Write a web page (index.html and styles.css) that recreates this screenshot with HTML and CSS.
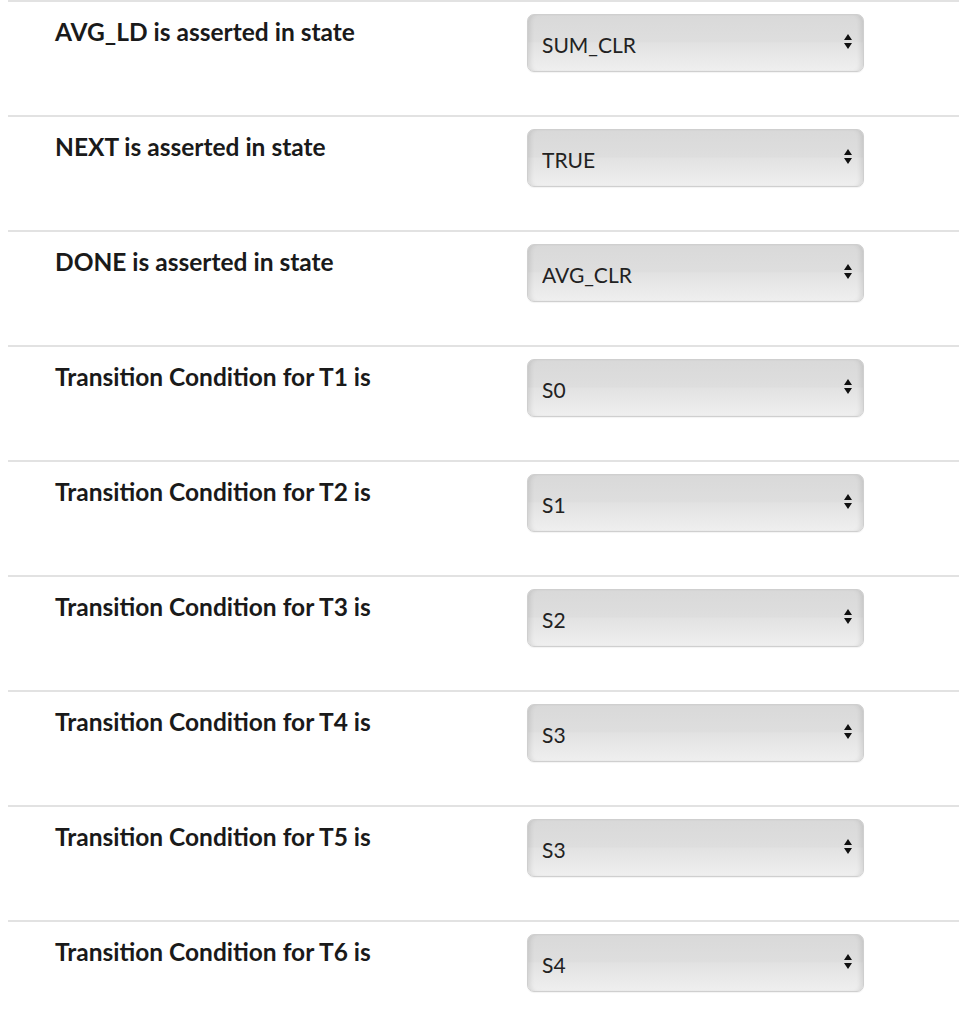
FILE: index.html
```html
<!DOCTYPE html>
<html>
<head>
<meta charset="utf-8">
<link rel="stylesheet" href="styles.css">
</head>
<body>
<div class="list">
  <div class="row"><div class="label">AVG_LD is asserted in state</div><div class="sel"><select><option>SUM_CLR</option></select><svg class="arr" width="10" height="15" viewBox="0 0 10 15"><path d="M5 0 L9 6 L1 6 Z M1 9 L9 9 L5 15 Z" fill="#111"/></svg></div></div>
  <div class="row"><div class="label">NEXT is asserted in state</div><div class="sel"><select><option>TRUE</option></select><svg class="arr" width="10" height="15" viewBox="0 0 10 15"><path d="M5 0 L9 6 L1 6 Z M1 9 L9 9 L5 15 Z" fill="#111"/></svg></div></div>
  <div class="row"><div class="label">DONE is asserted in state</div><div class="sel"><select><option>AVG_CLR</option></select><svg class="arr" width="10" height="15" viewBox="0 0 10 15"><path d="M5 0 L9 6 L1 6 Z M1 9 L9 9 L5 15 Z" fill="#111"/></svg></div></div>
  <div class="row"><div class="label">Transition Condition for T1 is</div><div class="sel"><select><option>S0</option></select><svg class="arr" width="10" height="15" viewBox="0 0 10 15"><path d="M5 0 L9 6 L1 6 Z M1 9 L9 9 L5 15 Z" fill="#111"/></svg></div></div>
  <div class="row"><div class="label">Transition Condition for T2 is</div><div class="sel"><select><option>S1</option></select><svg class="arr" width="10" height="15" viewBox="0 0 10 15"><path d="M5 0 L9 6 L1 6 Z M1 9 L9 9 L5 15 Z" fill="#111"/></svg></div></div>
  <div class="row"><div class="label">Transition Condition for T3 is</div><div class="sel"><select><option>S2</option></select><svg class="arr" width="10" height="15" viewBox="0 0 10 15"><path d="M5 0 L9 6 L1 6 Z M1 9 L9 9 L5 15 Z" fill="#111"/></svg></div></div>
  <div class="row"><div class="label">Transition Condition for T4 is</div><div class="sel"><select><option>S3</option></select><svg class="arr" width="10" height="15" viewBox="0 0 10 15"><path d="M5 0 L9 6 L1 6 Z M1 9 L9 9 L5 15 Z" fill="#111"/></svg></div></div>
  <div class="row"><div class="label">Transition Condition for T5 is</div><div class="sel"><select><option>S3</option></select><svg class="arr" width="10" height="15" viewBox="0 0 10 15"><path d="M5 0 L9 6 L1 6 Z M1 9 L9 9 L5 15 Z" fill="#111"/></svg></div></div>
  <div class="row"><div class="label">Transition Condition for T6 is</div><div class="sel"><select><option>S4</option></select><svg class="arr" width="10" height="15" viewBox="0 0 10 15"><path d="M5 0 L9 6 L1 6 Z M1 9 L9 9 L5 15 Z" fill="#111"/></svg></div></div>
</div>
</body>
</html>
```

FILE: styles.css
```css
html, body {
  margin: 0;
  padding: 0;
  background: #fff;
}
body {
  font-family: Lato, "Open Sans", sans-serif;
  color: #1a1a1a;
}
.list {
  margin: 0 13px 0 8px;
}
.row {
  display: flex;
  align-items: flex-start;
  height: 113px;
  border-top: 2px solid #e2e2e2;
}
.label {
  width: 472px;
  padding-left: 47px;
  padding-top: 16px;
  font-weight: 700;
  font-size: 24.5px;
  line-height: 28px;
}
.sel {
  position: relative;
  margin-top: 12px;
  width: 337px;
  height: 58px;
}
.sel select {
  -webkit-appearance: none;
  appearance: none;
  width: 100%;
  height: 100%;
  margin: 0;
  box-sizing: border-box;
  border: 1px solid #cfcfcf;
  border-radius: 7px;
  padding: 2px 0 0 14px;
  font-family: Lato, "Open Sans", sans-serif;
  font-size: 21px;
  color: #222;
  background: linear-gradient(#d9d9d9 0%, #dedede 48%, #e2e2e2 50%, #efefef 100%);
  box-shadow: inset 5px 0 5px -3px rgba(0,0,0,0.10), inset -5px 0 5px -3px rgba(0,0,0,0.10), 0 1px 1px rgba(0,0,0,0.05);
  outline: none;
}
.arr {
  position: absolute;
  right: 11px;
  top: 20px;
  pointer-events: none;
}
```
